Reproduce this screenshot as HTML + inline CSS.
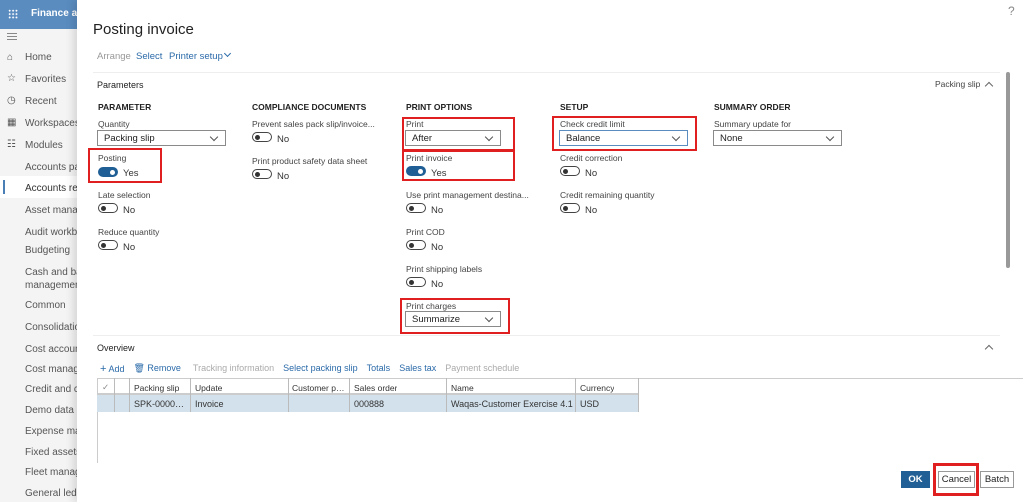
<!DOCTYPE html>
<html><head><meta charset="utf-8"><style>
*{margin:0;padding:0;box-sizing:border-box}
body{width:1024px;height:502px;overflow:hidden;position:relative;font-family:"Liberation Sans",sans-serif;background:#f4f4f4;color:#333}
.a{position:absolute;white-space:nowrap}
.side{font-size:10px;color:#555}
.lbl{font-size:8.5px;color:#444}
.hd{font-size:8.5px;font-weight:bold;color:#222}
.dd{position:absolute;height:16px;border:1px solid #8a8a8a;background:#fff;font-size:9.5px;padding:2px 6px;color:#222}
.dd:after{content:"";position:absolute;right:8px;top:3px;width:5px;height:5px;border-right:1px solid #555;border-bottom:1px solid #555;transform:rotate(45deg)}
.tg{position:absolute;width:20px;height:10px;border:1px solid #444;border-radius:6px;background:#fff}
.tg:before{content:"";position:absolute;left:2px;top:1.5px;width:5px;height:5px;border-radius:50%;background:#333}
.tg.on{background:#1f5f95;border-color:#1f5f95}
.tg.on:before{left:auto;right:2px;background:#fff}
.tv{font-size:9.5px;color:#333}
.red{position:absolute;border:2px solid #e02020}
.lnk{color:#2a6aa8}
.g{position:absolute;font-size:8.5px;color:#333;overflow:hidden;white-space:nowrap;text-overflow:ellipsis}
.tb{position:absolute;left:100px;top:363px;display:flex;gap:9px;font-size:9px;white-space:nowrap}
</style></head><body>
<div class="a" style="left:0;top:0;width:80px;height:29px;background:#5a8cc0"></div>
<div class="a" style="left:8px;top:9px;width:10px;height:10px;background:radial-gradient(circle,#fff 0.9px,transparent 1.1px) 0 0/3.4px 3.4px"></div>
<div class="a" style="left:31px;top:8px;font-size:10px;color:#fff;font-weight:bold">Finance and</div>
<div class="a" style="left:7px;top:33px;width:10px;height:1px;background:#888;box-shadow:0 3px 0 #888,0 6px 0 #888"></div>
<div class="a side" style="left:7px;top:52px">⌂</div><div class="a side" style="left:25px;top:52px">Home</div>
<div class="a side" style="left:7px;top:73px">☆</div><div class="a side" style="left:25px;top:74px">Favorites</div>
<div class="a side" style="left:7px;top:95px">◷</div><div class="a side" style="left:25px;top:96px">Recent</div>
<div class="a side" style="left:7px;top:117px">▦</div><div class="a side" style="left:25px;top:118px">Workspaces</div>
<div class="a side" style="left:7px;top:139px">☷</div><div class="a side" style="left:25px;top:140px">Modules</div>
<div class="a side" style="left:25px;top:162px">Accounts payable</div>
<div class="a" style="left:0;top:176px;width:80px;height:22px;background:#fff"></div>
<div class="a" style="left:3px;top:180px;width:2px;height:14px;background:#4a7fb5"></div>
<div class="a side" style="left:25px;top:183px;color:#333">Accounts receivable</div>
<div class="a side" style="left:25px;top:205px">Asset management</div>
<div class="a side" style="left:25px;top:227px">Audit workbench</div>
<div class="a side" style="left:25px;top:245px">Budgeting</div>
<div class="a side" style="left:25px;top:267px">Cash and bank</div>
<div class="a side" style="left:25px;top:280px">management</div>
<div class="a side" style="left:25px;top:300px">Common</div>
<div class="a side" style="left:25px;top:322px">Consolidation</div>
<div class="a side" style="left:25px;top:344px">Cost accounting</div>
<div class="a side" style="left:25px;top:364px">Cost management</div>
<div class="a side" style="left:25px;top:384px">Credit and collections</div>
<div class="a side" style="left:25px;top:405px">Demo data</div>
<div class="a side" style="left:25px;top:426px">Expense management</div>
<div class="a side" style="left:25px;top:447px">Fixed assets</div>
<div class="a side" style="left:25px;top:467px">Fleet management</div>
<div class="a side" style="left:25px;top:488px">General ledger</div>
<div class="a" style="left:77px;top:0;width:947px;height:502px;background:#fff;box-shadow:-4px 0 8px rgba(0,0,0,.12)"></div>
<div class="a" style="left:1008px;top:4px;font-size:12px;color:#888">?</div>
<div class="a" style="left:93px;top:21px;font-size:15px;color:#222">Posting invoice</div>
<div class="a" style="left:97px;top:51px;font-size:9.5px;color:#999">Arrange</div>
<div class="a lnk" style="left:136px;top:51px;font-size:9.5px">Select</div>
<div class="a lnk" style="left:169px;top:51px;font-size:9.5px">Printer setup</div>
<div class="a" style="left:225px;top:51px;width:5px;height:5px;border-right:1px solid #2a6aa8;border-bottom:1px solid #2a6aa8;transform:rotate(45deg)"></div>
<div class="a" style="left:93px;top:72px;width:907px;height:1px;background:#eee"></div>
<div class="a" style="left:97px;top:80px;font-size:9px;color:#222">Parameters</div>
<div class="a" style="left:935px;top:79px;font-size:8.5px;color:#444">Packing slip</div>
<div class="a" style="left:986px;top:83px;width:6px;height:6px;border-left:1px solid #666;border-top:1px solid #666;transform:rotate(45deg)"></div>
<div class="a" style="left:1006px;top:72px;width:4px;height:196px;background:#999;border-radius:2px"></div>
<div class="a hd" style="left:98px;top:102px">PARAMETER</div>
<div class="a lbl" style="left:98px;top:119px">Quantity</div>
<div class="dd" style="left:97px;top:130px;width:129px">Packing slip</div>
<div class="a lbl" style="left:98px;top:153px">Posting</div>
<div class="tg on" style="left:98px;top:167px"></div><div class="a tv" style="left:123px;top:168px">Yes</div>
<div class="red" style="left:88px;top:148px;width:74px;height:35px"></div>
<div class="a lbl" style="left:98px;top:190px">Late selection</div>
<div class="tg" style="left:98px;top:203px"></div><div class="a tv" style="left:123px;top:205px">No</div>
<div class="a lbl" style="left:98px;top:227px">Reduce quantity</div>
<div class="tg" style="left:98px;top:240px"></div><div class="a tv" style="left:123px;top:242px">No</div>
<div class="a hd" style="left:252px;top:102px">COMPLIANCE DOCUMENTS</div>
<div class="a lbl" style="left:252px;top:119px">Prevent sales pack slip/invoice...</div>
<div class="tg" style="left:252px;top:132px"></div><div class="a tv" style="left:277px;top:134px">No</div>
<div class="a lbl" style="left:252px;top:156px">Print product safety data sheet</div>
<div class="tg" style="left:252px;top:169px"></div><div class="a tv" style="left:277px;top:171px">No</div>
<div class="a hd" style="left:406px;top:102px">PRINT OPTIONS</div>
<div class="a lbl" style="left:406px;top:119px">Print</div>
<div class="dd" style="left:405px;top:130px;width:96px">After</div>
<div class="red" style="left:402px;top:117px;width:113px;height:34px"></div>
<div class="a lbl" style="left:406px;top:153px">Print invoice</div>
<div class="tg on" style="left:406px;top:166px"></div><div class="a tv" style="left:431px;top:168px">Yes</div>
<div class="red" style="left:402px;top:150px;width:113px;height:31px"></div>
<div class="a lbl" style="left:406px;top:190px">Use print management destina...</div>
<div class="tg" style="left:406px;top:203px"></div><div class="a tv" style="left:431px;top:205px">No</div>
<div class="a lbl" style="left:406px;top:227px">Print COD</div>
<div class="tg" style="left:406px;top:240px"></div><div class="a tv" style="left:431px;top:242px">No</div>
<div class="a lbl" style="left:406px;top:264px">Print shipping labels</div>
<div class="tg" style="left:406px;top:277px"></div><div class="a tv" style="left:431px;top:279px">No</div>
<div class="a lbl" style="left:406px;top:301px">Print charges</div>
<div class="dd" style="left:405px;top:311px;width:96px">Summarize</div>
<div class="red" style="left:400px;top:298px;width:110px;height:36px"></div>
<div class="a hd" style="left:560px;top:102px">SETUP</div>
<div class="a lbl" style="left:560px;top:119px">Check credit limit</div>
<div class="dd" style="left:559px;top:130px;width:129px;border-color:#5a8cc0">Balance</div>
<div class="red" style="left:552px;top:116px;width:145px;height:35px"></div>
<div class="a lbl" style="left:560px;top:153px">Credit correction</div>
<div class="tg" style="left:560px;top:166px"></div><div class="a tv" style="left:585px;top:168px">No</div>
<div class="a lbl" style="left:560px;top:190px">Credit remaining quantity</div>
<div class="tg" style="left:560px;top:203px"></div><div class="a tv" style="left:585px;top:205px">No</div>
<div class="a hd" style="left:714px;top:102px">SUMMARY ORDER</div>
<div class="a lbl" style="left:714px;top:119px">Summary update for</div>
<div class="dd" style="left:713px;top:130px;width:129px">None</div>
<div class="a" style="left:93px;top:335px;width:907px;height:1px;background:#eee"></div>
<div class="a" style="left:97px;top:343px;font-size:9px;color:#222">Overview</div>
<div class="a" style="left:986px;top:346px;width:6px;height:6px;border-left:1px solid #666;border-top:1px solid #666;transform:rotate(45deg)"></div>
<div class="tb">
<span class="lnk"><span style="font-size:11px">+</span> Add</span>
<span class="lnk">🗑 Remove</span>
<span style="color:#aaa;margin-left:3px">Tracking information</span>
<span class="lnk">Select packing slip</span>
<span class="lnk">Totals</span>
<span class="lnk">Sales tax</span>
<span style="color:#aaa">Payment schedule</span>
</div>
<div class="a" style="left:97px;top:378px;width:926px;height:85px;border:1px solid #ccc;border-bottom:none;border-right:none"></div>
<div class="a" style="left:97px;top:378px;width:541px;height:17px;border-bottom:2px solid #ccc"></div>
<div class="a" style="left:97px;top:395px;width:541px;height:17px;background:#d3e1ec"></div>
<div class="a" style="left:114px;top:378px;width:1px;height:34px;background:#bbb"></div>
<div class="a" style="left:129px;top:378px;width:1px;height:34px;background:#bbb"></div>
<div class="a" style="left:190px;top:378px;width:1px;height:34px;background:#bbb"></div>
<div class="a" style="left:288px;top:378px;width:1px;height:34px;background:#bbb"></div>
<div class="a" style="left:349px;top:378px;width:1px;height:34px;background:#bbb"></div>
<div class="a" style="left:446px;top:378px;width:1px;height:34px;background:#bbb"></div>
<div class="a" style="left:575px;top:378px;width:1px;height:34px;background:#bbb"></div>
<div class="a" style="left:638px;top:378px;width:1px;height:34px;background:#bbb"></div>
<div class="g" style="left:102px;top:382px;color:#888">✓</div>
<div class="g" style="left:134px;top:383px">Packing slip</div>
<div class="g" style="left:195px;top:383px">Update</div>
<div class="g" style="left:292px;top:383px;width:55px">Customer pa...</div>
<div class="g" style="left:354px;top:383px">Sales order</div>
<div class="g" style="left:451px;top:383px">Name</div>
<div class="g" style="left:580px;top:383px">Currency</div>
<div class="g" style="left:134px;top:399px;font-size:9px;width:55px">SPK-000019...</div>
<div class="g" style="left:195px;top:399px;font-size:9px">Invoice</div>
<div class="g lnk" style="left:354px;top:399px;font-size:9px">000888</div>
<div class="g" style="left:451px;top:399px;font-size:9px;width:123px">Waqas-Customer Exercise 4.1</div>
<div class="g lnk" style="left:580px;top:399px;font-size:9px">USD</div>
<div class="a" style="left:901px;top:471px;width:29px;height:17px;background:#1f5f95;color:#fff;font-size:9.5px;font-weight:bold;text-align:center;line-height:17px">OK</div>
<div class="a" style="left:938px;top:471px;width:37px;height:17px;border:1px solid #999;font-size:9.5px;text-align:center;line-height:15px;color:#222">Cancel</div>
<div class="a" style="left:980px;top:471px;width:34px;height:17px;border:1px solid #999;font-size:9.5px;text-align:center;line-height:15px;color:#222">Batch</div>
<div class="red" style="left:933px;top:463px;width:46px;height:33px;border-width:3px"></div>
</body></html>
